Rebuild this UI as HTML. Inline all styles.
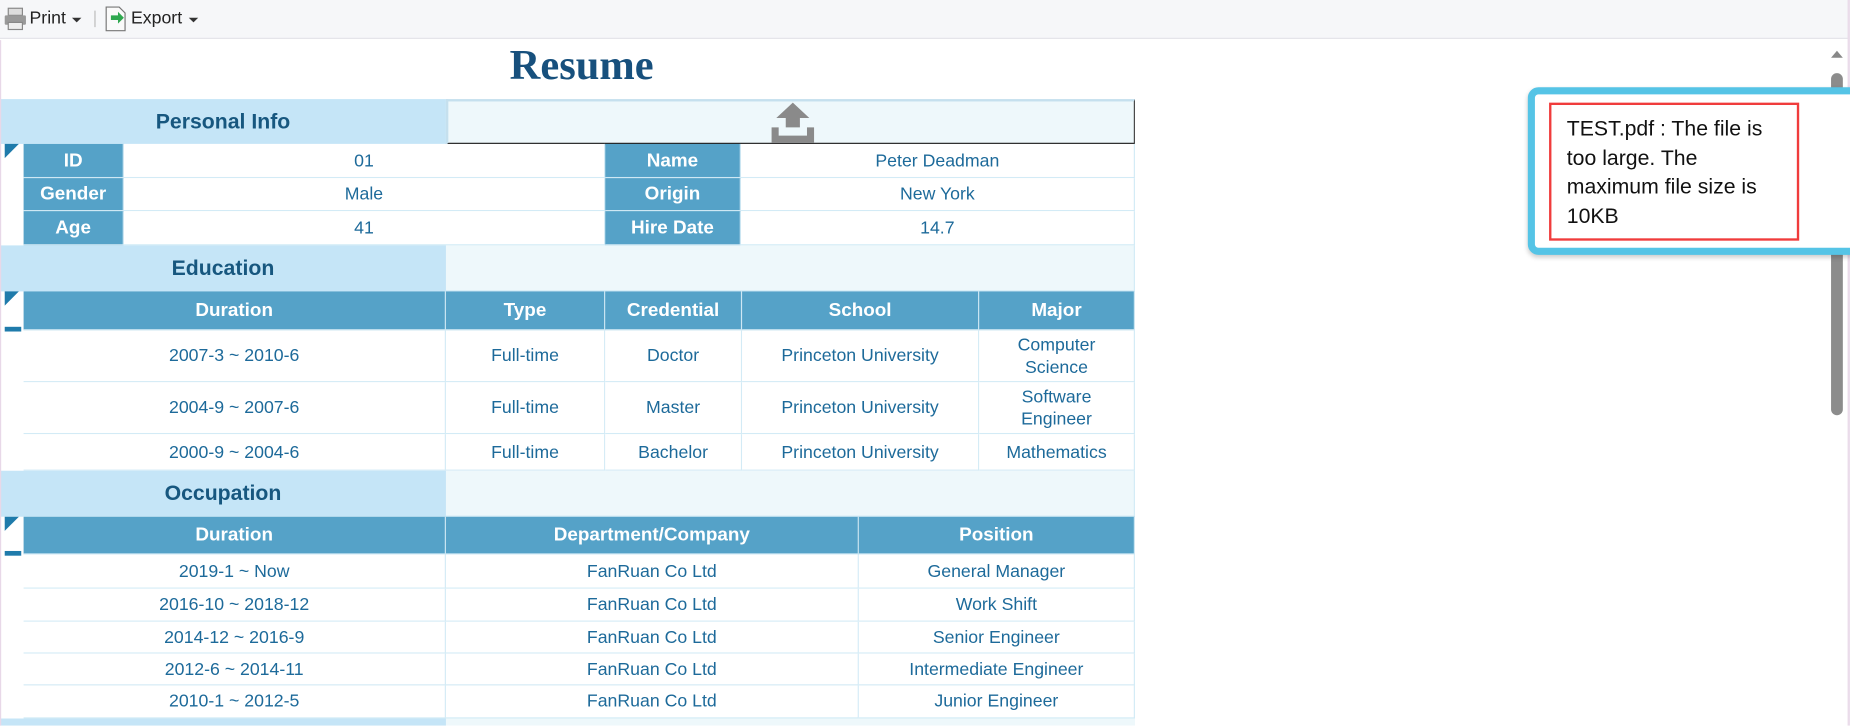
<!DOCTYPE html>
<html><head><meta charset="utf-8">
<style>
html,body{margin:0;padding:0;width:1850px;height:725px;overflow:hidden;background:#fff;}
#w{position:absolute;left:0;top:0;width:1568px;height:615px;transform:scale(1.1798);transform-origin:0 0;font-family:"Liberation Sans",sans-serif;}
.a{position:absolute;box-sizing:border-box;}
.c{position:absolute;box-sizing:border-box;display:flex;align-items:center;justify-content:center;text-align:center;color:#1d6a9a;font-size:15px;border-right:1px solid #d3ebf6;border-bottom:1px solid #d3ebf6;background:#fff;line-height:19px;}
.h{background:#55a2c8;color:#fff;font-weight:bold;font-size:16px;border-color:#cfe8f4;}
.sec{background:#c5e5f7;color:#17577f;font-weight:bold;font-size:18px;border:none;}
.sec2{background:#eef8fb;border-right:1px solid #d3ebf6;}
.tri{position:absolute;left:4px;width:0;height:0;border-top:12px solid #1f7bab;border-right:12px solid transparent;}
.tri2{position:absolute;left:4px;width:14px;height:4px;background:#1f7bab;}
</style></head><body><div id="w">
<div class="a" style="left:0;top:0;width:1568px;height:33px;background:#f6f7f9;border-bottom:1px solid #e4e4ea;"></div>
<svg class="a" style="left:3px;top:6px" width="20" height="20" viewBox="0 0 20 20"><rect x="4" y="1" width="12" height="6" fill="#ddd" stroke="#888"/><rect x="1" y="7" width="18" height="8" rx="1" fill="#999"/><rect x="4" y="13" width="12" height="6" fill="#eee" stroke="#888"/></svg>
<div class="a" style="left:25px;top:7px;font-size:15px;color:#222;">Print</div>
<div class="a" style="left:61px;top:15px;border-left:4px solid transparent;border-right:4px solid transparent;border-top:4px solid #333;"></div>
<div class="a" style="left:80px;top:9px;width:1px;height:14px;background:#bbb;"></div>
<svg class="a" style="left:88px;top:5px" width="20" height="22" viewBox="0 0 20 22"><path d="M2 1h11l5 5v15H2z" fill="#fafafa" stroke="#777"/><path d="M6 8h6V5l5 5-5 5v-3H6z" fill="#2fa84f"/></svg>
<div class="a" style="left:111px;top:7px;font-size:15px;color:#222;">Export</div>
<div class="a" style="left:160px;top:15px;border-left:4px solid transparent;border-right:4px solid transparent;border-top:4px solid #333;"></div>
<div class="a" style="left:0;top:34px;width:986px;text-align:center;font-family:'Liberation Serif',serif;font-weight:bold;font-size:36px;color:#17507d;">Resume</div>
<div class="c sec" style="left:0;top:84px;width:378px;height:38px;">Personal Info</div>
<div class="a" style="left:378px;top:84px;width:584px;height:39px;background:#eef8fb;border:2px solid #c5e0ee;border-bottom:2px solid #222;border-right:1px solid #444;"></div>
<svg class="a" style="left:652px;top:86px" width="40" height="36" viewBox="0 0 40 36"><path d="M20 1L6 14h8v8h12v-8h8z" fill="#8a8a8a"/><path d="M2 22h6v7h24v-7h6v13H2z" fill="#8a8a8a"/></svg>
<div class="tri" style="top:122px"></div>
<div class="c h" style="left:20px;top:122px;width:85px;height:29px;">ID</div>
<div class="c" style="left:105px;top:122px;width:408px;height:29px;">01</div>
<div class="c h" style="left:513px;top:122px;width:115px;height:29px;">Name</div>
<div class="c" style="left:628px;top:122px;width:334px;height:29px;">Peter Deadman</div>
<div class="c h" style="left:20px;top:151px;width:85px;height:28px;">Gender</div>
<div class="c" style="left:105px;top:151px;width:408px;height:28px;">Male</div>
<div class="c h" style="left:513px;top:151px;width:115px;height:28px;">Origin</div>
<div class="c" style="left:628px;top:151px;width:334px;height:28px;">New York</div>
<div class="c h" style="left:20px;top:179px;width:85px;height:29px;">Age</div>
<div class="c" style="left:105px;top:179px;width:408px;height:29px;">41</div>
<div class="c h" style="left:513px;top:179px;width:115px;height:29px;">Hire Date</div>
<div class="c" style="left:628px;top:179px;width:334px;height:29px;">14.7</div>
<div class="c sec" style="left:0;top:208px;width:378px;height:39px;">Education</div>
<div class="c sec2" style="left:378px;top:208px;width:584px;height:39px;"></div>
<div class="tri" style="top:247px"></div><div class="tri2" style="top:277px"></div>
<div class="c h" style="left:20px;top:247px;width:358px;height:33px;">Duration</div>
<div class="c h" style="left:378px;top:247px;width:135px;height:33px;">Type</div>
<div class="c h" style="left:513px;top:247px;width:116px;height:33px;">Credential</div>
<div class="c h" style="left:629px;top:247px;width:201px;height:33px;">School</div>
<div class="c h" style="left:830px;top:247px;width:132px;height:33px;">Major</div>
<div class="c" style="left:20px;top:280px;width:358px;height:44px;">2007-3 ~ 2010-6</div>
<div class="c" style="left:378px;top:280px;width:135px;height:44px;">Full-time</div>
<div class="c" style="left:513px;top:280px;width:116px;height:44px;">Doctor</div>
<div class="c" style="left:629px;top:280px;width:201px;height:44px;">Princeton University</div>
<div class="c" style="left:830px;top:280px;width:132px;height:44px;">Computer<br>Science</div>
<div class="c" style="left:20px;top:324px;width:358px;height:44px;">2004-9 ~ 2007-6</div>
<div class="c" style="left:378px;top:324px;width:135px;height:44px;">Full-time</div>
<div class="c" style="left:513px;top:324px;width:116px;height:44px;">Master</div>
<div class="c" style="left:629px;top:324px;width:201px;height:44px;">Princeton University</div>
<div class="c" style="left:830px;top:324px;width:132px;height:44px;">Software<br>Engineer</div>
<div class="c" style="left:20px;top:368px;width:358px;height:31px;">2000-9 ~ 2004-6</div>
<div class="c" style="left:378px;top:368px;width:135px;height:31px;">Full-time</div>
<div class="c" style="left:513px;top:368px;width:116px;height:31px;">Bachelor</div>
<div class="c" style="left:629px;top:368px;width:201px;height:31px;">Princeton University</div>
<div class="c" style="left:830px;top:368px;width:132px;height:31px;">Mathematics</div>
<div class="c sec" style="left:0;top:399px;width:378px;height:39px;">Occupation</div>
<div class="c sec2" style="left:378px;top:399px;width:584px;height:39px;"></div>
<div class="tri" style="top:438px"></div><div class="tri2" style="top:467px"></div>
<div class="c h" style="left:20px;top:438px;width:358px;height:32px;">Duration</div>
<div class="c h" style="left:378px;top:438px;width:350px;height:32px;">Department/Company</div>
<div class="c h" style="left:728px;top:438px;width:234px;height:32px;">Position</div>
<div class="c" style="left:20px;top:470px;width:358px;height:29px;">2019-1 ~ Now</div>
<div class="c" style="left:378px;top:470px;width:350px;height:29px;">FanRuan Co Ltd</div>
<div class="c" style="left:728px;top:470px;width:234px;height:29px;">General Manager</div>
<div class="c" style="left:20px;top:499px;width:358px;height:28px;">2016-10 ~ 2018-12</div>
<div class="c" style="left:378px;top:499px;width:350px;height:28px;">FanRuan Co Ltd</div>
<div class="c" style="left:728px;top:499px;width:234px;height:28px;">Work Shift</div>
<div class="c" style="left:20px;top:527px;width:358px;height:27px;">2014-12 ~ 2016-9</div>
<div class="c" style="left:378px;top:527px;width:350px;height:27px;">FanRuan Co Ltd</div>
<div class="c" style="left:728px;top:527px;width:234px;height:27px;">Senior Engineer</div>
<div class="c" style="left:20px;top:554px;width:358px;height:27px;">2012-6 ~ 2014-11</div>
<div class="c" style="left:378px;top:554px;width:350px;height:27px;">FanRuan Co Ltd</div>
<div class="c" style="left:728px;top:554px;width:234px;height:27px;">Intermediate Engineer</div>
<div class="c" style="left:20px;top:581px;width:358px;height:28px;">2010-1 ~ 2012-5</div>
<div class="c" style="left:378px;top:581px;width:350px;height:28px;">FanRuan Co Ltd</div>
<div class="c" style="left:728px;top:581px;width:234px;height:28px;">Junior Engineer</div>
<div class="a" style="left:0;top:609px;width:378px;height:6px;background:#c5e5f7;"></div>
<div class="a" style="left:378px;top:609px;width:584px;height:6px;background:#eef8fb;"></div>
<div class="a" style="left:0;top:34px;width:1px;height:581px;background:#e8d8e8;"></div>
<div class="a" style="left:1552px;top:43px;border-left:5px solid transparent;border-right:5px solid transparent;border-bottom:6px solid #888;"></div>
<div class="a" style="left:1552px;top:62px;width:10px;height:290px;border-radius:5px;background:#8c8c8c;"></div>
<div class="a" style="left:1566px;top:0;width:2px;height:615px;background:#eadcea;"></div>
<div class="a" style="left:1295px;top:74px;width:290px;height:142px;border:6px solid #55c4e6;border-radius:9px;background:#fff;box-shadow:0 2px 4px rgba(0,0,0,.2);"></div>
<div class="a" style="left:1313px;top:87px;width:212px;height:117px;border:2px solid #f03c3c;padding:8px 0 0 13px;font-size:18px;line-height:24.5px;color:#111;white-space:nowrap;">TEST.pdf : The file is<br>too large. The<br>maximum file size is<br>10KB</div>
</div></body></html>
